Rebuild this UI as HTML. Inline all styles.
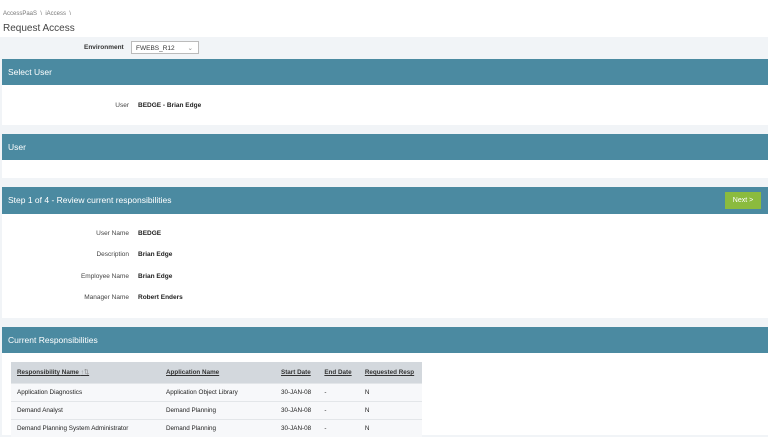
<!DOCTYPE html>
<html><head><style>
body{margin:0;width:768px;height:435px;overflow:hidden;background:#f1f4f7;font-family:"Liberation Sans",sans-serif;color:#222;position:relative}
.a{position:absolute}
.bar{position:absolute;left:2px;right:0;background:#4b8aa1;color:#fff;font-size:8.5px;padding-left:6px;box-sizing:border-box}
.pan{position:absolute;left:2px;right:0;background:#fff}
.lbl{position:absolute;font-size:6.5px;color:#444;text-align:right;width:60px}
.val{position:absolute;font-size:6.5px;font-weight:bold;color:#222}
table{border-collapse:collapse;font-size:6.3px}
th{background:#d3d8dd;text-align:left;text-decoration:underline;height:21px;padding:0 6px;font-weight:bold;color:#333}
td{height:17px;padding:0 6px;border-top:1px solid #e3e6e9;background:#f7f8fa}
</style></head><body>
<div class="a" style="left:0;top:0;width:768px;height:37px;background:#fff"></div>
<div class="a" style="left:3px;top:11px;font-size:6px;color:#777">AccessPaaS &nbsp;\ &nbsp;iAccess &nbsp;\</div>
<div class="a" style="left:3px;top:23px;font-size:10px;color:#444">Request Access</div>
<div class="a" style="left:84px;top:44px;font-size:6.5px;font-weight:bold;color:#333">Environment</div>
<div class="a" style="left:131px;top:41px;width:68px;height:13px;border:1px solid #bbb;background:#fff;font-size:6.5px;box-sizing:border-box;padding:3px 4px;color:#333">FWEBS_R12<span style="position:absolute;right:5px;top:2px;color:#888">⌄</span></div>
<div class="bar" style="top:59px;height:26px;line-height:26px">Select User</div>
<div class="pan" style="top:85px;height:40px"></div>
<div class="lbl" style="left:69px;top:102px">User</div>
<div class="val" style="left:138px;top:102px">BEDGE - Brian Edge</div>
<div class="bar" style="top:134px;height:26px;line-height:26px">User</div>
<div class="pan" style="top:160px;height:18px"></div>
<div class="bar" style="top:187px;height:27px;line-height:27px">Step 1 of 4 - Review current responsibilities</div>
<div class="a" style="left:725px;top:192px;width:36px;height:17px;background:#8bbb3e;color:#fff;font-size:7px;line-height:17px;text-align:center">Next &gt;</div>
<div class="pan" style="top:214px;height:104px"></div>
<div class="lbl" style="left:69px;top:230px">User Name</div><div class="val" style="left:138px;top:230px">BEDGE</div>
<div class="lbl" style="left:69px;top:251px">Description</div><div class="val" style="left:138px;top:251px">Brian Edge</div>
<div class="lbl" style="left:69px;top:273px">Employee Name</div><div class="val" style="left:138px;top:273px">Brian Edge</div>
<div class="lbl" style="left:69px;top:294px">Manager Name</div><div class="val" style="left:138px;top:294px">Robert Enders</div>
<div class="bar" style="top:327px;height:26px;line-height:26px">Current Responsibilities</div>
<div class="pan" style="top:353px;height:82px"></div>
<table class="a" style="left:11px;top:362px;width:411px">
<tr><th style="width:137px">Responsibility Name <span style="text-decoration:none;color:#888;font-weight:normal">↑⇅</span></th><th style="width:103px">Application Name</th><th>Start Date</th><th>End Date</th><th>Requested Resp</th></tr>
<tr><td>Application Diagnostics</td><td>Application Object Library</td><td>30-JAN-08</td><td>-</td><td>N</td></tr>
<tr><td>Demand Analyst</td><td>Demand Planning</td><td>30-JAN-08</td><td>-</td><td>N</td></tr>
<tr><td>Demand Planning System Administrator</td><td>Demand Planning</td><td>30-JAN-08</td><td>-</td><td>N</td></tr>
</table>
</body></html>
